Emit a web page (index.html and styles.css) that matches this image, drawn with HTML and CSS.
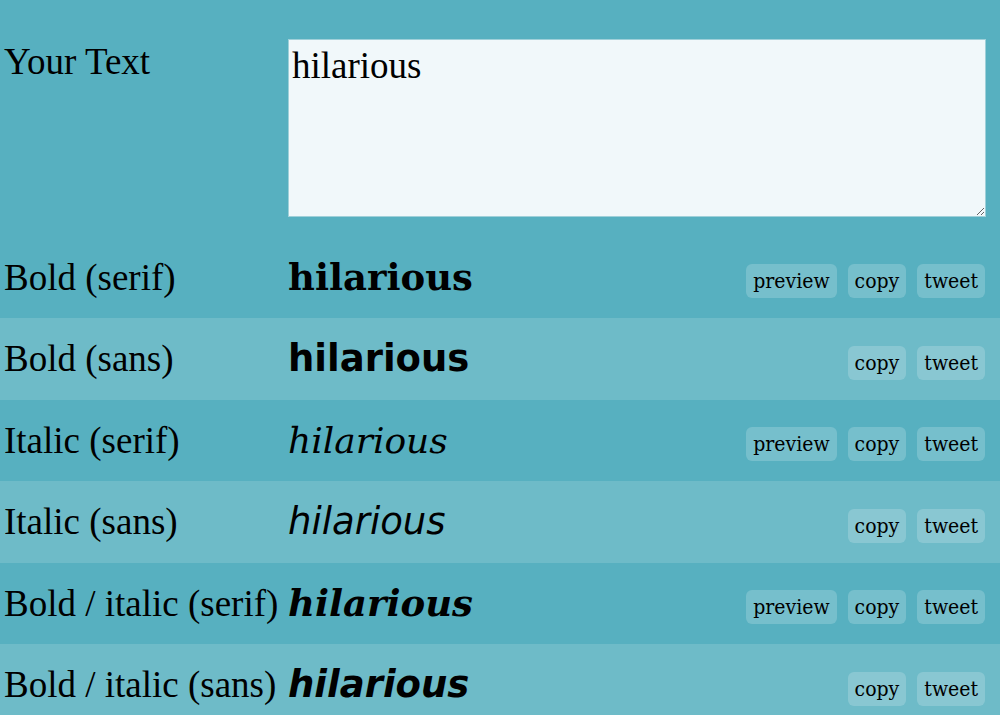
FILE: index.html
```html
<!DOCTYPE html>
<html>
<head>
<meta charset="utf-8">
<link rel="stylesheet" href="styles.css">
</head>
<body>
<div class="top">
  <div class="label">Your Text</div>
  <textarea class="input">hilarious</textarea>
</div>
<div class="row dark">
  <div class="label">Bold (serif)</div>
  <div class="value serif bold">hilarious</div>
  <div class="actions"><button class="btn">preview</button><button class="btn">copy</button><button class="btn">tweet</button></div>
</div>
<div class="row light">
  <div class="label">Bold (sans)</div>
  <div class="value sans bold">hilarious</div>
  <div class="actions"><button class="btn">copy</button><button class="btn">tweet</button></div>
</div>
<div class="row dark">
  <div class="label">Italic (serif)</div>
  <div class="value serif math">ℎ𝑖𝑙𝑎𝑟𝑖𝑜𝑢𝑠</div>
  <div class="actions"><button class="btn">preview</button><button class="btn">copy</button><button class="btn">tweet</button></div>
</div>
<div class="row light">
  <div class="label">Italic (sans)</div>
  <div class="value sans italic">hilarious</div>
  <div class="actions"><button class="btn">copy</button><button class="btn">tweet</button></div>
</div>
<div class="row dark">
  <div class="label">Bold / italic (serif)</div>
  <div class="value serif bold italic">hilarious</div>
  <div class="actions"><button class="btn">preview</button><button class="btn">copy</button><button class="btn">tweet</button></div>
</div>
<div class="row light">
  <div class="label">Bold / italic (sans)</div>
  <div class="value sans bold italic">hilarious</div>
  <div class="actions"><button class="btn">copy</button><button class="btn">tweet</button></div>
</div>
</body>
</html>
```
FILE: styles.css
```css
html, body {
  margin: 0;
  padding: 0;
  background: #57b0c0;
  color: #000;
  font-family: "Liberation Serif", "DejaVu Serif", "DejaVu Sans", serif;
  font-size: 37px;
}
.top {
  display: grid;
  grid-template-columns: 284px 698px;
  padding: 39px 14px 0 4px;
  height: 197.5px;
  align-items: start;
}
.top .label {
  padding-top: 2px;
  line-height: 41px;
}
.input {
  box-sizing: border-box;
  width: 698px;
  height: 178px;
  margin: 0;
  padding: 5px 3px 2px;
  border: 1px solid #9fd0d9;
  background: #f1f8fa;
  font-family: "Liberation Serif", serif;
  font-size: 37px;
  line-height: 41px;
  color: #000;
  resize: vertical;
}
.row {
  display: grid;
  grid-template-columns: 284px 1fr auto;
  align-items: center;
  height: 81.5px;
  padding: 0 15px 0 4px;
}
.dark { background: #57b0c0; }
.light { background: #6ebbc8; }
.label, .value {
  line-height: 41px;
  white-space: nowrap;
}
.serif { font-family: "DejaVu Serif", serif; }
.sans { font-family: "DejaVu Sans", sans-serif; }
.bold { font-weight: bold; }
.italic { font-style: italic; }
.math { font-size: 36px; }
.actions {
  display: flex;
  gap: 10px;
  padding-top: 8px;
}
.btn {
  height: 34px;
  padding: 0 7px;
  border: none;
  border-radius: 6px;
  font-family: "DejaVu Serif Condensed", "DejaVu Serif", serif;
  font-stretch: semi-condensed;
  font-size: 21px;
  color: #000;
  background: rgba(255, 255, 255, 0.19);
}
.btn + .btn { margin-left: 1px; }
```
